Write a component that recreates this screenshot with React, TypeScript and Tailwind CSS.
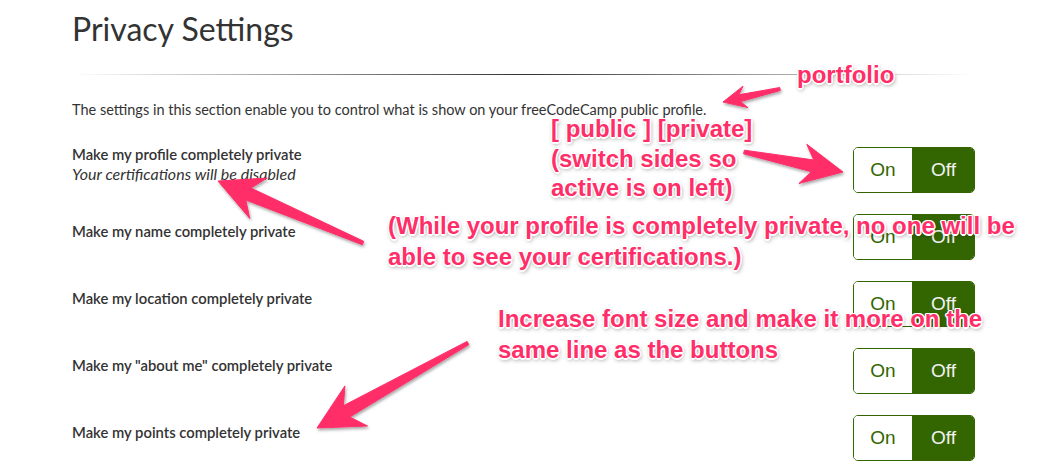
import React from "react";

type ArrowProps = {
  x1: number; y1: number; x2: number; y2: number;
  head: number; half: number; neckBack: number; neckHalf: number; tailHalf: number;
};

function arrowPoints(a: ArrowProps): string {
  const dx = a.x2 - a.x1;
  const dy = a.y2 - a.y1;
  const len = Math.hypot(dx, dy);
  const ux = dx / len;
  const uy = dy / len;
  const px = -uy;
  const py = ux;
  const at = (d: number, w: number) => [a.x1 + ux * d + px * w, a.y1 + uy * d + py * w];
  const pts = [
    at(0, a.tailHalf),
    at(len - a.neckBack, a.neckHalf),
    at(len - a.head, a.half),
    [a.x2, a.y2],
    at(len - a.head, -a.half),
    at(len - a.neckBack, -a.neckHalf),
    at(0, -a.tailHalf),
  ];
  return pts.map((p) => `${p[0].toFixed(1)},${p[1].toFixed(1)}`).join(" ");
}

const arrows: ArrowProps[] = [
  { x1: 780, y1: 89, x2: 723, y2: 102, head: 23, half: 11, neckBack: 17, neckHalf: 3.5, tailHalf: 1.5 },
  { x1: 744, y1: 152, x2: 843, y2: 172, head: 41, half: 20, neckBack: 31, neckHalf: 6, tailHalf: 1.8 },
  { x1: 363, y1: 243, x2: 218, y2: 181, head: 44, half: 22, neckBack: 33, neckHalf: 6.5, tailHalf: 1.8 },
  { x1: 468, y1: 343, x2: 317, y2: 428, head: 45, half: 23, neckBack: 34, neckHalf: 6.5, tailHalf: 1.8 },
];

const shadow =
  "[text-shadow:-1px_-1px_0_#fff,1px_-1px_0_#fff,-1px_1px_0_#fff,1px_1px_0_#fff,0_-1.5px_0_#fff,0_1.5px_0_#fff,-1.5px_0_0_#fff,1.5px_0_0_#fff,1px_2px_4px_rgba(0,0,0,0.5)]";

function Toggle() {
  return (
    <div className="flex h-[46px] w-[122px] shrink-0 overflow-hidden rounded-[5px] border border-[#336600] font-['Liberation_Sans',Arial,sans-serif] text-[19px]">
      <div className="flex w-[59px] items-center justify-center border-r border-[#336600] bg-white text-[#336600]">On</div>
      <div className="flex flex-1 items-center justify-center bg-[#336600] text-[#f2f2f2]">Off</div>
    </div>
  );
}

function Row({ children }: { children: React.ReactNode }) {
  return (
    <div className="flex h-[46px] items-center justify-between">
      <div className="mb-[13px] text-[14.8px] font-semibold leading-5 text-[#333]">{children}</div>
      <Toggle />
    </div>
  );
}

export default function App() {
  return (
    <div className="relative h-[470px] w-[1047px] overflow-hidden bg-white font-[Lato,sans-serif] text-[#333]">
      <div className="px-[72px] pt-[10px]">
        <h1 className="text-[32px] leading-[38px] font-normal text-[#333]">Privacy Settings</h1>
        <div className="mt-[26px] h-px bg-linear-to-r from-transparent via-[#333] to-transparent" />
        <p className="mt-[25px] text-[14.5px] leading-5">
          The settings in this section enable you to control what is show on your freeCodeCamp public profile.
        </p>
        <div className="mt-[27px] flex flex-col gap-[21px]">
          <Row>
            <div>Make my profile completely private</div>
            <div className="text-[16px] font-normal italic">Your certifications will be disabled</div>
          </Row>
          <Row>Make my name completely private</Row>
          <Row>Make my location completely private</Row>
          <Row>Make my "about me" completely private</Row>
          <Row>Make my points completely private</Row>
        </div>
      </div>

      <svg className="pointer-events-none absolute inset-0" width="1047" height="470" viewBox="0 0 1047 470">
        <defs>
          <filter id="ds" x="-20%" y="-20%" width="140%" height="140%">
            <feDropShadow dx="1" dy="2" stdDeviation="1.5" floodColor="#000" floodOpacity="0.35" />
          </filter>
        </defs>
        {arrows.map((a, i) => (
          <polygon key={i} points={arrowPoints(a)} fill="#ff2e69" stroke="#ff2e69" strokeWidth="1" strokeLinejoin="round" filter="url(#ds)" />
        ))}
      </svg>

      <div className={`pointer-events-none absolute inset-0 font-['Liberation_Sans',Arial,sans-serif] text-[24px] font-bold text-[#ff2e69] ${shadow}`}>
        <div className="absolute top-[61px] left-[797px] leading-[28px]">portfolio</div>
        <div className="absolute top-[114px] left-[551px] leading-[29.5px]">
          <div>[ public ] [private]</div>
          <div>(switch sides so</div>
          <div>active is on left)</div>
        </div>
        <div className="absolute top-[210px] left-[388px] leading-[31px]">
          <div className="whitespace-nowrap">(While your profile is completely private, no one will be</div>
          <div>able to see your certifications.)</div>
        </div>
        <div className="absolute top-[303px] left-[498px] leading-[31px]">
          <div className="whitespace-nowrap">Increase font size and make it more on the</div>
          <div>same line as the buttons</div>
        </div>
      </div>
    </div>
  );
}
